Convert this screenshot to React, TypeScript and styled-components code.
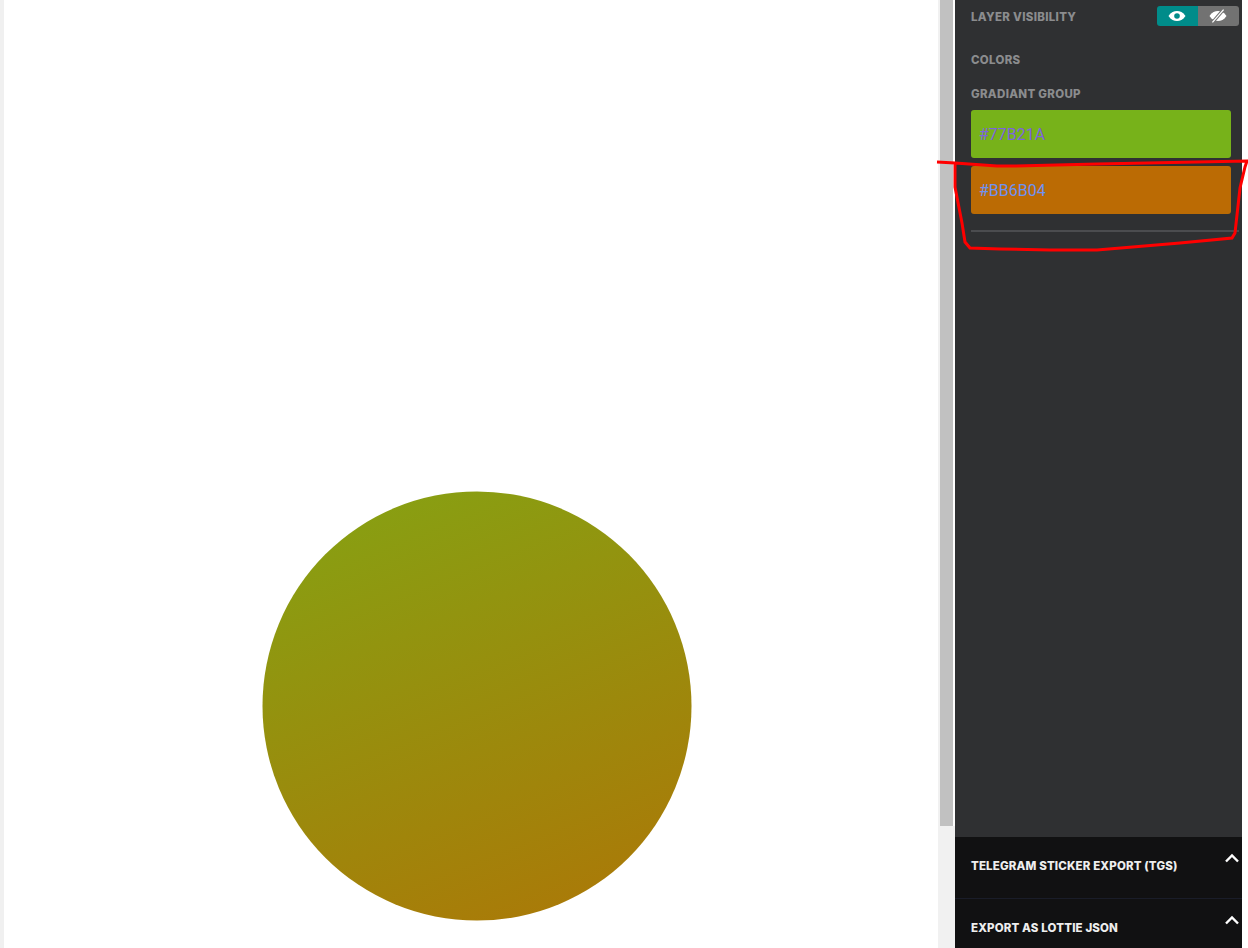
import React from 'react'
import styled, { createGlobalStyle } from 'styled-components'

const GlobalStyle = createGlobalStyle`
    html, body {
        margin: 0;
        padding: 0;
        height: 948px;
        overflow: hidden;
        background: #ffffff;
    }
`

const ALMOND = 'M0.5 6C3 2.2 6 1 9 1C12 1 15 2.2 17.5 6C15 9.8 12 11 9 11C6 11 3 9.8 0.5 6Z'

const EyeIcon = () => (
    <svg width="18" height="12" viewBox="0 0 18 12">
        <path d={ALMOND} fill="#ffffff" />
        <circle cx="9" cy="6" r="2.8" fill="#008c8a" />
    </svg>
)

const EyeOffIcon = () => (
    <svg width="18" height="14" viewBox="0 0 18 14">
        <g transform="translate(0 1)">
            <path d={ALMOND} fill="#ffffff" />
        </g>
        <line x1="3" y1="14" x2="15" y2="0" stroke="#727272" strokeWidth="3.4" />
        <line x1="3.4" y1="13.4" x2="14.6" y2="0.6" stroke="#ffffff" strokeWidth="1.3" />
    </svg>
)

const Chevron = () => (
    <ChevronIcon width="16" height="12" viewBox="0 0 16 12">
        <polyline points="2,9.5 8,3.5 14,9.5" fill="none" stroke="#ffffff" strokeWidth="2.4" />
    </ChevronIcon>
)

const App = () => {
    return (
        <Page>
            <GlobalStyle />
            <Canvas>
                <Circle width="430" height="430" viewBox="0 0 430 430">
                    <defs>
                        <linearGradient id="fill" x1="0.3" y1="0" x2="0.7" y2="1">
                            <stop offset="0" stopColor="#889F12" />
                            <stop offset="1" stopColor="#AA7A08" />
                        </linearGradient>
                    </defs>
                    <circle cx="215" cy="215" r="214.5" fill="url(#fill)" />
                </Circle>
            </Canvas>
            <Scrollbar>
                <Thumb />
            </Scrollbar>
            <Panel>
                <PanelBody>
                    <VisibilityRow>
                        <Label>LAYER VISIBILITY</Label>
                        <Toggle>
                            <ToggleButton active><EyeIcon /></ToggleButton>
                            <ToggleButton><EyeOffIcon /></ToggleButton>
                        </Toggle>
                    </VisibilityRow>
                    <ColorsLabel>COLORS</ColorsLabel>
                    <GroupLabel>GRADIANT GROUP</GroupLabel>
                    <SwatchList>
                        <Swatch color="#77B21A" text="#7C64DE">#77B21A</Swatch>
                        <Swatch color="#BB6B04" text="#6E92F2">#BB6B04</Swatch>
                    </SwatchList>
                    <Divider />
                </PanelBody>
                <Footer>
                    <FooterRow>
                        <FooterTitle>TELEGRAM STICKER EXPORT (TGS)</FooterTitle>
                        <Chevron />
                    </FooterRow>
                    <FooterRow>
                        <FooterTitle>EXPORT AS LOTTIE JSON</FooterTitle>
                        <Chevron />
                    </FooterRow>
                </Footer>
            </Panel>
            <Annotation width="1248" height="948" viewBox="0 0 1248 948">
                <path
                    d="M937 162 L955 163 L997 166 L1013 166 L1097 164 L1247 161 L1245 167 L1240 188 L1235 233 L1232 238 L1180 243 L1097 250 L1050 250 L1000 249 L970 248 L965 242 L962 223 L955 187 L955 163"
                    fill="none"
                    stroke="#FF0000"
                    strokeWidth="3"
                />
            </Annotation>
        </Page>
    )
}

const Page = styled.div`
    position: relative;
    display: flex;
    width: 1248px;
    height: 948px;
    overflow: hidden;
    font-family: "Inter", "Liberation Sans", sans-serif;
`

const Canvas = styled.div`
    flex: none;
    width: 934px;
    height: 948px;
    margin-left: 4px;
    background: #ffffff;
    box-shadow: -4px 0 0 #f0f0f0;
    padding: 491px 0 0 258px;
    box-sizing: border-box;
`

const Circle = styled.svg`
    display: block;
`

const Scrollbar = styled.div`
    flex: none;
    width: 17px;
    height: 948px;
    padding-left: 2px;
    box-sizing: border-box;
    background: #f1f1f1;
`

const Thumb = styled.div`
    width: 13px;
    height: 826px;
    background: #c1c1c1;
    border-right: 2px solid #ffffff;
`

const Panel = styled.div`
    flex: none;
    display: flex;
    flex-direction: column;
    width: 287px;
    height: 948px;
    background: #2f3032;
`

const PanelBody = styled.div`
    flex: 1;
    padding: 6px 3px 0 16px;
`

const VisibilityRow = styled.div`
    display: flex;
    align-items: center;
    justify-content: space-between;
    height: 20px;
`

const Label = styled.div`
    font-size: 11.5px;
    line-height: 20px;
    font-weight: 800;
    letter-spacing: 0.3px;
    color: #8b8c8e;
    padding-top: 1px;
`

const ColorsLabel = styled(Label)`
    margin-top: 23px;
`

const GroupLabel = styled(Label)`
    margin-top: 13px;
`

const Toggle = styled.div`
    display: flex;
    width: 82px;
    height: 20px;
    border-radius: 3px;
    overflow: hidden;
`

const ToggleButton = styled.div<{ active?: boolean }>`
    flex: 1;
    display: flex;
    align-items: center;
    justify-content: center;
    padding-right: 2px;
    background: ${(p) => (p.active ? '#008c8a' : '#727272')};
`

const SwatchList = styled.div`
    display: flex;
    flex-direction: column;
    gap: 8px;
    margin-top: 6px;
`

const Swatch = styled.div<{ color: string; text: string }>`
    display: flex;
    align-items: center;
    width: 260px;
    height: 48px;
    padding-left: 8px;
    box-sizing: border-box;
    border-radius: 3px;
    font-family: "Roboto", "Liberation Sans", sans-serif;
    font-size: 16px;
    background: ${(p) => p.color};
    color: ${(p) => p.text};
`

const Divider = styled.div`
    height: 2px;
    margin-top: 16px;
    background: #4b4c4f;
`

const Footer = styled.div`
    flex: none;
    background: #111112;
`

const FooterRow = styled.div`
    display: flex;
    justify-content: space-between;
    align-items: flex-start;
    height: 62px;
    padding: 15px 2px 0 16px;
    box-sizing: border-box;
    border-bottom: 1px solid #1a1d29;

    &:last-child {
        height: 49px;
        border-bottom: none;
    }
`

const FooterTitle = styled.div`
    margin-top: 4px;
    font-size: 11.5px;
    line-height: 20px;
    font-weight: 800;
    letter-spacing: 0.15px;
    color: #eeeeee;
`

const ChevronIcon = styled.svg`
    display: block;
`

const Annotation = styled.svg`
    position: absolute;
    top: 0;
    left: 0;
    pointer-events: none;
`

export default App
